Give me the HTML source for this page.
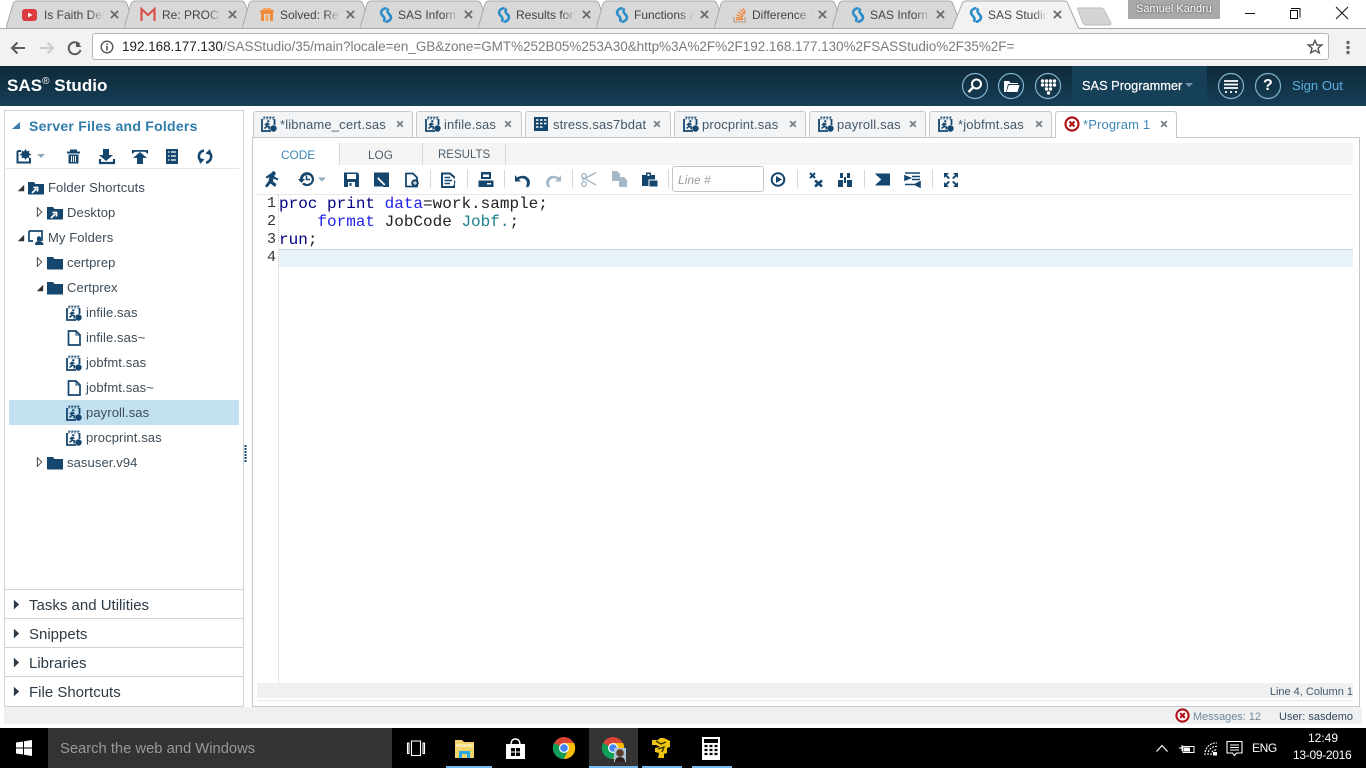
<!DOCTYPE html>
<html lang="en"><head><meta charset="utf-8"><title>SAS Studio</title>
<style>
html,body{margin:0;padding:0;width:1366px;height:768px;overflow:hidden;background:#fff;font-family:"Liberation Sans",sans-serif}
.a{position:absolute}
.t{position:absolute;white-space:nowrap;line-height:20px;height:20px}
svg{position:absolute;overflow:visible}
.tree{font-size:13px;color:#3c4b58;letter-spacing:.1px}
.ct{font-size:12px;color:#444;width:60px;overflow:hidden;-webkit-mask-image:linear-gradient(90deg,#000 75%,transparent);mask-image:linear-gradient(90deg,#000 75%,transparent)}
.tab{position:absolute;top:111px;height:26px;box-sizing:border-box;border:1px solid #c6c9cb;border-bottom:0;background:#f3f4f5;border-radius:3px 3px 0 0}
.tt{font-size:13px;color:#44586a;letter-spacing:.15px}
.acc{font-size:15px;color:#2b3a46}
.code{position:absolute;left:279px;font:16px/18px "Liberation Mono",monospace;white-space:pre;color:#222}
.num{position:absolute;left:257px;width:19px;text-align:right;font:15px/18px "Liberation Mono",monospace;color:#333}
</style></head><body>
<svg width="0" height="0" style="position:absolute">
<defs>
<symbol id="ctab" viewBox="0 0 130 28"><path d="M0 28L7 4Q8 1 11 1L117 1Q120 1 121 4L130 28" fill="#d8d8d8" stroke="#a8a8a8"/></symbol>
<symbol id="s" viewBox="0 0 16 16"><path d="M8.500 1C3 2 1.500 6 5 9C7 11 7 13 5.500 14.500" fill="none" stroke="#2a8dc9" stroke-width="2.600"/><path d="M7.500 15C13 14 14.500 10 11 7C9 5 9 3 10.500 1.500" fill="none" stroke="#2a8dc9" stroke-width="2.600"/></symbol>
<symbol id="x" viewBox="0 0 10 10"><path d="M1 1L9 9M9 1L1 9" stroke="#6b6b6b" stroke-width="2" fill="none"/></symbol>
<symbol id="tx" viewBox="0 0 10 10"><path d="M1.500 1.500L8.500 8.500M8.500 1.500L1.500 8.500" stroke="#7a7f84" stroke-width="2.200" fill="none"/></symbol>
<symbol id="prog" viewBox="0 0 16 16"><path d="M1 3V15H10M13.500 3V9" fill="none" stroke="#15466e" stroke-width="1.800"/><path d="M3 3.500V1.200H4.500M6 3.500V1.200H7.500M9 3.500V1.200H10.500M12 3.500V1.200H13.500" stroke="#15466e" stroke-width="1.100" fill="none"/><circle cx="7.300" cy="5.300" r="1.200" fill="#15466e"/><path d="M3.500 12.500L5.800 10.500L6 7.500L8.500 8.500M6 10L8.500 11L8 13.500M6 7.500L3.800 9" stroke="#15466e" stroke-width="1.500" fill="none"/><circle cx="12.500" cy="12.500" r="3.200" fill="#15466e"/></symbol>
<symbol id="file" viewBox="0 0 16 16"><path d="M2.500 1H10L14 5V15H2.500Z" fill="#fff" stroke="#15466e" stroke-width="1.700"/><path d="M10 1V5H14" fill="none" stroke="#15466e"/></symbol>
<symbol id="folder" viewBox="0 0 16 14"><path d="M0 13.500V1H6L7.500 3H16V13.500Z" fill="#15466e"/></symbol>
<symbol id="fshort" viewBox="0 0 16 14"><path d="M0 13.500V1H6L7.500 3H16V13.500Z" fill="#15466e"/><path d="M4 12L8 8M5.500 6.500H9.500V10.500" stroke="#fff" stroke-width="1.800" fill="none"/></symbol>
<symbol id="myf" viewBox="0 0 16 15"><path d="M1 1H14V10H9M1 1V11H5" fill="none" stroke="#15466e" stroke-width="1.700"/><circle cx="11" cy="8.500" r="2.200" fill="#15466e"/><path d="M7 15Q7 11 11 11T15.500 15Z" fill="#15466e"/></symbol>
<symbol id="open" viewBox="0 0 8 12"><path d="M1.500 1L6.500 6L1.500 11Z" fill="#fff" stroke="#333"/></symbol>
<symbol id="dn" viewBox="0 0 10 10"><path d="M9 1V9H1Z" fill="#333"/></symbol>
<symbol id="bar" viewBox="0 0 8 12"><path d="M1 0.500L7 6L1 11.500Z" fill="#2b3a46"/></symbol>
<symbol id="err" viewBox="0 0 16 16"><circle cx="8" cy="8" r="6.500" fill="#fff" stroke="#b01217" stroke-width="2.200"/><path d="M5.500 5.500L10.500 10.500M10.500 5.500L5.500 10.500" stroke="#b01217" stroke-width="2.200"/></symbol>
</defs></svg>

<!-- browser tab strip -->
<div class="a" style="left:0;top:0;width:1366px;height:28px;background:#fff"></div>
<svg style="left:6px;top:0" width="130" height="28"><use href="#ctab"/></svg>
<svg style="left:124px;top:0" width="130" height="28"><use href="#ctab"/></svg>
<svg style="left:242px;top:0" width="130" height="28"><use href="#ctab"/></svg>
<svg style="left:360px;top:0" width="130" height="28"><use href="#ctab"/></svg>
<svg style="left:478px;top:0" width="130" height="28"><use href="#ctab"/></svg>
<svg style="left:596px;top:0" width="130" height="28"><use href="#ctab"/></svg>
<svg style="left:714px;top:0" width="130" height="28"><use href="#ctab"/></svg>
<svg style="left:832px;top:0" width="130" height="28"><use href="#ctab"/></svg>
<div class="a" style="left:0;top:28px;width:1366px;height:1px;background:#aaa"></div>
<svg style="left:950px;top:0" width="130" height="30"><path d="M2 29L12 4Q13 1 16 1L114 1Q117 1 118 4L129 29" fill="#f2f2f2" stroke="#a8a8a8"/></svg>
<svg style="left:1077px;top:6px" width="36" height="20"><path d="M1 2H24Q26 2 27 4L34 17Q34 19 32 19H9Q7 19 6 17L1 4Q0 2 1 2Z" fill="#d4d4d4" stroke="#bbb"/></svg>
<svg style="left:22px;top:8px" width="16" height="14"><rect y="1" width="15" height="12" rx="3" fill="#dc3b3f"/><path d="M6 4.500L10.500 7L6 9.500Z" fill="#fff"/></svg>
<svg style="left:140px;top:7px" width="16" height="14"><path d="M1.500 14V2L8 8L14.500 2V14" fill="none" stroke="#d9534a" stroke-width="2.200"/></svg>
<svg style="left:259px;top:7px" width="16" height="16"><path d="M1 3H15L14 7H2Z" fill="#f08a3c"/><rect x="2" y="7" width="3" height="7" fill="#f08a3c"/><rect x="6.500" y="8" width="3" height="6" fill="#f6a761"/><rect x="11" y="7" width="3" height="7" fill="#f08a3c"/><rect x="4" y="1" width="8" height="2" fill="#f6a761"/></svg>
<svg style="left:378px;top:7px" width="16" height="16"><use href="#s"/></svg>
<svg style="left:496px;top:7px" width="16" height="16"><use href="#s"/></svg>
<svg style="left:614px;top:7px" width="16" height="16"><use href="#s"/></svg>
<svg style="left:732px;top:7px" width="16" height="16"><path d="M2 10V15H13V10" fill="none" stroke="#b9a28a" stroke-width="1.300"/><path d="M4 12.500H11M4 10.500L11 11.300M4.500 8L11 9.800M6 5L11.500 8.500M8.500 2.500L12.500 7.500M11 1L13.500 6.500" stroke="#ef8236" stroke-width="1.200" fill="none"/></svg>
<svg style="left:850px;top:7px" width="16" height="16"><use href="#s"/></svg>
<svg style="left:968px;top:7px" width="16" height="16"><use href="#s"/></svg>
<div class="t ct" style="left:44px;top:5px">Is Faith Delu</div>
<div class="t ct" style="left:162px;top:5px">Re: PROC Fo</div>
<div class="t ct" style="left:280px;top:5px">Solved: Re: P</div>
<div class="t ct" style="left:398px;top:5px">SAS Inform</div>
<div class="t ct" style="left:516px;top:5px">Results for: f</div>
<div class="t ct" style="left:634px;top:5px">Functions an</div>
<div class="t ct" style="left:752px;top:5px">Difference be</div>
<div class="t ct" style="left:870px;top:5px">SAS Inform</div>
<div class="t ct" style="left:988px;top:5px">SAS Studio</div>
<svg style="left:110px;top:10px" width="9" height="9"><use href="#x"/></svg>
<svg style="left:228px;top:10px" width="9" height="9"><use href="#x"/></svg>
<svg style="left:346px;top:10px" width="9" height="9"><use href="#x"/></svg>
<svg style="left:464px;top:10px" width="9" height="9"><use href="#x"/></svg>
<svg style="left:582px;top:10px" width="9" height="9"><use href="#x"/></svg>
<svg style="left:700px;top:10px" width="9" height="9"><use href="#x"/></svg>
<svg style="left:818px;top:10px" width="9" height="9"><use href="#x"/></svg>
<svg style="left:936px;top:10px" width="9" height="9"><use href="#x"/></svg>
<svg style="left:1053px;top:10px" width="9" height="9"><use href="#x"/></svg>
<div class="a" style="left:1128px;top:0;width:92px;height:19px;background:#a9a9a9;color:#fff;font-size:11px;line-height:18px;text-align:center;text-shadow:0 0 2px #333">Samuel Kandru</div>
<svg style="left:1240px;top:5px" width="120" height="16"><path d="M5 8.500H15" stroke="#111"/><path d="M51 3.500H60V12.500M50.500 5.500H57.500V13.500H50.500Z" fill="none" stroke="#111"/><path d="M96 2L108 14M108 2L96 14" stroke="#111" fill="none"/></svg>

<!-- browser toolbar -->
<div class="a" style="left:0;top:29px;width:1366px;height:37px;background:#f2f2f2"></div>
<svg style="left:10px;top:40px" width="80" height="20"><path d="M15 8H2M7.500 2.500L2 8L7.500 13.500" fill="none" stroke="#5a5a5a" stroke-width="2"/><path d="M30 8H43M37.500 2.500L43 8L37.500 13.500" fill="none" stroke="#cdcdcd" stroke-width="2"/><path d="M69.500 4.500A6 6 0 1 0 70.500 10" fill="none" stroke="#5a5a5a" stroke-width="2"/><path d="M66 1.500V7H71.500Z" fill="#5a5a5a"/></svg>
<div class="a" style="left:92px;top:33px;width:1237px;height:27px;box-sizing:border-box;background:#fff;border:1px solid #b5b5b5;border-radius:3px"></div>
<svg style="left:100px;top:40px" width="14" height="14"><circle cx="7" cy="7" r="5.800" fill="none" stroke="#555" stroke-width="1.400"/><path d="M7 6V10.500M7 3.500V5" stroke="#555" stroke-width="1.600"/></svg>
<div class="t" style="left:122px;top:37px;font-size:13.500px;color:#7b7b7b;letter-spacing:-.035px"><span style="color:#222">192.168.177.130</span>/SASStudio/35/main?locale=en_GB&amp;zone=GMT%252B05%253A30&amp;http%3A%2F%2F192.168.177.130%2FSASStudio%2F35%2F=</div>
<svg style="left:1307px;top:39px" width="16" height="16"><path d="M8 1.500L10 6H14.800L11 9.200L12.300 14L8 11.300L3.700 14L5 9.200L1.200 6H6Z" fill="none" stroke="#555" stroke-width="1.400"/></svg>
<svg style="left:1346px;top:40px" width="6" height="16"><circle cx="2" cy="2.500" r="1.700" fill="#666"/><circle cx="2" cy="7.500" r="1.700" fill="#666"/><circle cx="2" cy="12.500" r="1.700" fill="#666"/></svg>

<!-- SAS header -->
<div class="a" style="left:0;top:66px;width:1366px;height:40px;background:linear-gradient(#0f2937,#163f58)"></div>
<div class="t" style="left:7px;top:76px;font-size:17px;font-weight:bold;color:#fff;letter-spacing:.05px">SAS<sup style="font-size:10px;line-height:0;vertical-align:7px;font-weight:normal">®</sup> Studio</div>
<svg style="left:962px;top:73px" width="100" height="26" fill="none" stroke="#7fb4cf" stroke-width="1.200">
<circle cx="13" cy="13" r="12.500"/><circle cx="49" cy="13" r="12.500"/><circle cx="86" cy="13" r="12.500"/>
<circle cx="14.500" cy="11" r="4.500" stroke="#fff" stroke-width="2"/><path d="M11 14.500L6.500 19" stroke="#fff" stroke-width="2.600"/>
<path d="M42 19V8H47L48.500 10H56V11H46L44 19Z" fill="#fff" stroke="none"/><path d="M44.500 19L46.800 12H57.500L55.500 19Z" fill="#fff" stroke="none"/>
<g fill="#fff" stroke="none"><circle cx="80.500" cy="8" r="1.700"/><circle cx="84.500" cy="8" r="1.700"/><circle cx="88.500" cy="8" r="1.700"/><circle cx="92.500" cy="8" r="1.700"/><circle cx="80.500" cy="12" r="1.700"/><circle cx="84.500" cy="12" r="1.700"/><circle cx="88.500" cy="12" r="1.700"/><circle cx="92.500" cy="12" r="1.700"/><circle cx="84.500" cy="16" r="1.700"/><circle cx="88.500" cy="16" r="1.700"/><circle cx="86.500" cy="20" r="1.700"/></g></svg>
<div class="a" style="left:1072px;top:66px;width:135px;height:40px;background:#163f58"></div>
<div class="t" style="left:1082px;top:76px;font-size:12.800px;color:#fff;-webkit-text-stroke:.2px #fff">SAS Programmer</div>
<svg style="left:1185px;top:83px" width="8" height="5"><path d="M0 0H8L4 4Z" fill="#6f95ad"/></svg>
<svg style="left:1218px;top:73px" width="64" height="26" fill="none" stroke="#7fb4cf" stroke-width="1.200">
<circle cx="13" cy="13" r="12.500"/><circle cx="50" cy="13" r="12.500"/>
<path d="M6 8H20M6 11.500H20M6 15H20" stroke="#fff" stroke-width="1.700"/><path d="M7 19H9M12 19H14M17 19H19" stroke="#fff" stroke-width="1.800"/></svg>
<div class="t" style="left:1263px;top:76px;font-size:16px;font-weight:bold;color:#fff">?</div>
<div class="t" style="left:1292px;top:76px;font-size:13.100px;color:#5eb0e0">Sign Out</div>

<!-- left panel -->
<div class="a" style="left:4px;top:110px;width:240px;height:597px;box-sizing:border-box;border:1px solid #cfd2d4;background:#fff"></div>
<svg style="left:12px;top:121px" width="9" height="9"><path d="M8 1V8H0Z" fill="#3a7ea9"/></svg>
<div class="t" style="left:29px;top:116px;font-size:14px;font-weight:bold;color:#2f7cab;letter-spacing:.25px">Server Files and Folders</div>
<svg style="left:16px;top:148px" width="205" height="17">
<path d="M1.500 3V14.500H14V10" fill="none" stroke="#15466e" stroke-width="2"/><path d="M1.500 3H5" stroke="#15466e" stroke-width="2"/><path d="M9.500 1L11 3.500L13.500 2.500L13 5.200L15.500 6.500L13 7.800L13.500 10.500L11 9.500L9.500 12L8 9.500L5.500 10.500L6 7.800L3.500 6.500L6 5.200L5.500 2.500L8 3.500Z" fill="#15466e"/>
<path d="M21 6H29L25 10Z" fill="#8fa9bd"/>
<path d="M51 4.500H64M54 2.500H61" stroke="#15466e" stroke-width="2"/><path d="M52.500 6.500H62.500V15.500H52.500Z" fill="#15466e"/><path d="M55.500 8V14M57.500 8V14M59.500 8V14" stroke="#fff"/>
<path d="M87 1H93V7H97L90 13L83 7H87Z" fill="#15466e"/><path d="M84 11V15H98V11" fill="none" stroke="#15466e" stroke-width="2.200"/>
<path d="M116 2H132V6L129 3.800H119L116 6Z" fill="#15466e"/><path d="M124 4L131 10H127V16H121V10H117Z" fill="#15466e"/>
<rect x="150" y="1" width="12" height="15" fill="#15466e"/><path d="M152 4H153.500M155 4H160M152 8H153.500M155 8H160M152 12H153.500M155 12H160" stroke="#fff" stroke-width="1.200"/>
<path d="M188 2.500A6 6 0 0 0 185 13" fill="none" stroke="#15466e" stroke-width="2.600"/><path d="M182.500 9.500L188.500 11.500L184 16Z" fill="#15466e"/><path d="M190 14.500A6 6 0 0 0 193 4" fill="none" stroke="#15466e" stroke-width="2.600"/><path d="M195.500 7.500L189.500 5.500L194 1Z" fill="#15466e"/>
</svg>
<div class="a" style="left:6px;top:168px;width:233px;height:1px;background:#e3e5e6"></div>

<svg style="left:17px;top:184px" width="8" height="8"><use href="#dn"/></svg>
<svg style="left:28px;top:181px" width="16" height="14"><use href="#fshort"/></svg>
<div class="t tree" style="left:48px;top:178px">Folder Shortcuts</div>
<svg style="left:36px;top:206px" width="7" height="12"><use href="#open"/></svg>
<svg style="left:47px;top:206px" width="16" height="14"><use href="#fshort"/></svg>
<div class="t tree" style="left:67px;top:203px">Desktop</div>
<svg style="left:17px;top:234px" width="8" height="8"><use href="#dn"/></svg>
<svg style="left:28px;top:230px" width="16" height="15"><use href="#myf"/></svg>
<div class="t tree" style="left:48px;top:228px">My Folders</div>
<svg style="left:36px;top:256px" width="7" height="12"><use href="#open"/></svg>
<svg style="left:47px;top:256px" width="16" height="14"><use href="#folder"/></svg>
<div class="t tree" style="left:67px;top:253px">certprep</div>
<svg style="left:36px;top:284px" width="8" height="8"><use href="#dn"/></svg>
<svg style="left:47px;top:281px" width="16" height="14"><use href="#folder"/></svg>
<div class="t tree" style="left:67px;top:278px">Certprex</div>
<div class="a" style="left:9px;top:400px;width:230px;height:25px;background:#c3e0f0"></div>
<svg style="left:66px;top:305px" width="16" height="16"><use href="#prog"/></svg>
<div class="t tree" style="left:86px;top:303px">infile.sas</div>
<svg style="left:66px;top:330px" width="16" height="16"><use href="#file"/></svg>
<div class="t tree" style="left:86px;top:328px">infile.sas~</div>
<svg style="left:66px;top:355px" width="16" height="16"><use href="#prog"/></svg>
<div class="t tree" style="left:86px;top:353px">jobfmt.sas</div>
<svg style="left:66px;top:380px" width="16" height="16"><use href="#file"/></svg>
<div class="t tree" style="left:86px;top:378px">jobfmt.sas~</div>
<svg style="left:66px;top:405px" width="16" height="16"><use href="#prog"/></svg>
<div class="t tree" style="left:86px;top:403px">payroll.sas</div>
<svg style="left:66px;top:430px" width="16" height="16"><use href="#prog"/></svg>
<div class="t tree" style="left:86px;top:428px">procprint.sas</div>
<svg style="left:36px;top:456px" width="7" height="12"><use href="#open"/></svg>
<svg style="left:47px;top:456px" width="16" height="14"><use href="#folder"/></svg>
<div class="t tree" style="left:67px;top:453px">sasuser.v94</div>
<svg style="left:244px;top:445px" width="4" height="17"><path d="M1.500 0V17" stroke="#15466e" stroke-width="2" stroke-dasharray="2 1"/></svg>

<div class="a" style="left:5px;top:589px;width:238px;height:1px;background:#cfd2d4"></div>
<div class="a" style="left:5px;top:618px;width:238px;height:1px;background:#cfd2d4"></div>
<div class="a" style="left:5px;top:647px;width:238px;height:1px;background:#cfd2d4"></div>
<div class="a" style="left:5px;top:676px;width:238px;height:1px;background:#cfd2d4"></div>
<svg style="left:13px;top:599px" width="7" height="11"><use href="#bar"/></svg>
<svg style="left:13px;top:628px" width="7" height="11"><use href="#bar"/></svg>
<svg style="left:13px;top:657px" width="7" height="11"><use href="#bar"/></svg>
<svg style="left:13px;top:686px" width="7" height="11"><use href="#bar"/></svg>
<div class="t acc" style="left:29px;top:596px">Tasks and Utilities</div>
<div class="t acc" style="left:29px;top:625px">Snippets</div>
<div class="t acc" style="left:29px;top:654px">Libraries</div>
<div class="t acc" style="left:29px;top:683px">File Shortcuts</div>

<!-- right panel -->
<div class="a" style="left:252px;top:137px;width:1108px;height:570px;box-sizing:border-box;border:1px solid #c6c9cb;background:#fff"></div>
<div class="tab" style="left:253px;width:160px"></div>
<div class="tab" style="left:416px;width:106px"></div>
<div class="tab" style="left:525px;width:146px"></div>
<div class="tab" style="left:674px;width:132px"></div>
<div class="tab" style="left:809px;width:117px"></div>
<div class="tab" style="left:929px;width:123px"></div>
<div class="tab" style="left:1055px;width:122px;height:27px;background:#fff;z-index:2"></div>
<svg style="left:261px;top:116px" width="16" height="16"><use href="#prog"/></svg>
<svg style="left:425px;top:116px" width="16" height="16"><use href="#prog"/></svg>
<svg style="left:534px;top:116px" width="15" height="16"><path d="M0 1H14V15H0Z" fill="#15466e"/><path d="M2 4H4.500M6 4H8.500M10 4H12.500M2 7.500H4.500M6 7.500H8.500M10 7.500H12.500M2 11H4.500M6 11H8.500" stroke="#fff" stroke-width="1.500"/></svg>
<svg style="left:683px;top:116px" width="16" height="16"><use href="#prog"/></svg>
<svg style="left:818px;top:116px" width="16" height="16"><use href="#prog"/></svg>
<svg style="left:938px;top:116px" width="16" height="16"><use href="#prog"/></svg>
<svg style="left:1064px;top:116px;z-index:3" width="16" height="16"><use href="#err"/></svg>
<div class="t tt" style="left:280px;top:115px">*libname_cert.sas</div>
<div class="t tt" style="left:444px;top:115px">infile.sas</div>
<div class="t tt" style="left:553px;top:115px">stress.sas7bdat</div>
<div class="t tt" style="left:702px;top:115px">procprint.sas</div>
<div class="t tt" style="left:837px;top:115px">payroll.sas</div>
<div class="t tt" style="left:958px;top:115px">*jobfmt.sas</div>
<div class="t tt" style="left:1083px;top:115px;color:#3d86b8;z-index:3">*Program 1</div>
<svg style="left:396px;top:120px" width="8" height="8"><use href="#tx"/></svg>
<svg style="left:504px;top:120px" width="8" height="8"><use href="#tx"/></svg>
<svg style="left:653px;top:120px" width="8" height="8"><use href="#tx"/></svg>
<svg style="left:789px;top:120px" width="8" height="8"><use href="#tx"/></svg>
<svg style="left:909px;top:120px" width="8" height="8"><use href="#tx"/></svg>
<svg style="left:1035px;top:120px" width="8" height="8"><use href="#tx"/></svg>
<svg style="left:1160px;top:120px;z-index:3" width="8" height="8"><use href="#tx"/></svg>

<div class="a" style="left:257px;top:143px;width:1096px;height:22px;background:#f5f5f5"></div>
<div class="a" style="left:257px;top:143px;width:82px;height:22px;background:#fff;border-right:1px solid #d5d7d9"></div>
<div class="a" style="left:422px;top:143px;width:1px;height:22px;background:#d5d7d9"></div>
<div class="a" style="left:505px;top:143px;width:1px;height:22px;background:#d5d7d9"></div>
<div class="t" style="left:281px;top:145px;font-size:11.800px;color:#3a86b5">CODE</div>
<div class="t" style="left:368px;top:145px;font-size:11.800px;color:#4b5d6c">LOG</div>
<div class="t" style="left:438px;top:145px;font-size:11.500px;color:#4b5d6c">RESULTS</div>

<!-- editor toolbar -->
<svg style="left:257px;top:165px" width="720" height="29">
<g fill="#15466e">
<circle cx="16.500" cy="8.500" r="2.200"/><path d="M8 21L11.500 16L12.500 12L10 13.500L8.500 12L13.500 8.500H16L18 12L21.500 13.500L20.500 15.500L16.500 13.500L16 16.500L19.500 19L18 22L13.500 18.500L10 22.500Z"/>
<path d="M43 14A7 7 0 1 1 45 19L47 17.500A4.500 4.500 0 1 0 45.800 14H48L44.500 18L41 14Z"/><path d="M49.500 10.500V14.500H53" fill="none" stroke="#15466e" stroke-width="1.500"/>
<path d="M61 12.500H69L65 16.500Z" fill="#8fa9bd"/>
<path d="M87 7.500H100.500L102 9V22H87ZM90 9V14H99V9ZM91 17V22H98V17Z" fill-rule="evenodd"/><rect x="92.500" y="18" width="2" height="3"/>
<path d="M117 7.500H132V15L127 21.500H117Z"/><path d="M121 12L128 19L131 21.500L127.500 21L120.500 14Z" fill="#fff"/><path d="M132 15L132 22H126Z"/>
<path d="M149 8.500H156L160 12.500V21.500H149Z" fill="none" stroke="#15466e" stroke-width="1.800"/><circle cx="158" cy="18" r="3.800"/><path d="M156 18H160M158 16V20" stroke="#fff"/>
<g transform="translate(-2,0)"><path d="M187 8.500H195L199 12V22H187Z" fill="none" stroke="#15466e" stroke-width="2"/><path d="M189.500 12.500H195M189.500 15.500H197M189.500 18.500H195" stroke="#15466e" stroke-width="1.400"/><path d="M197 12L202 15L198 21Z" fill="#fff"/><path d="M199 14.500L200.500 17L199 19.500Z"/></g>
<path d="M224 7H234V14H224ZM226 9.500V12H232V9.500Z" fill-rule="evenodd"/><path d="M221.500 15.500H236.500V22H221.500Z"/><rect x="230" y="18" width="4" height="1.500" fill="#fff"/>
<path d="M258 10L258 16.500L264 16.500L261.800 14.500A5 5 0 0 1 270 17.500L269 22.500L272 21.500Q275 14 268 11Q264 10 260 12.500Z"/>
</g>
<g fill="#a4b7c6"><path d="M304 10L304 16.500L298 16.500L300.200 14.500A5 5 0 0 0 292 17.500L293 22.500L290 21.500Q287 14 294 11Q298 10 302 12.500Z"/>
<g transform="translate(4,0)"><path d="M325 15L339 7.500M325 12L339 20" fill="none" stroke="#a4b7c6" stroke-width="1.400" transform="translate(-4,0)"/><circle cx="323" cy="11" r="2.300" fill="none" stroke="#a4b7c6" stroke-width="1.300"/><circle cx="323" cy="19" r="2.300" fill="none" stroke="#a4b7c6" stroke-width="1.300"/></g>
<path d="M355 6H360L363 9V16H355Z"/><path d="M362 12H367L370 15V22H362Z"/></g>
<g fill="#15466e"><path d="M385 10H389V7.500H394V10H398V21H385Z"/><rect x="390.500" y="9" width="2" height="2" fill="#fff"/><path d="M392 15H401V22H392Z" stroke="#fff"/></g>
<path d="M173.500 5V23M210.500 5V23M247.500 5V23M315.500 5V23M411.500 5V23M540.500 5V23M607.500 5V23M675.500 5V23" stroke="#d5d7d9"/>
<circle cx="521" cy="14.500" r="6.300" fill="none" stroke="#15466e" stroke-width="2"/><path d="M519 11L525 14.500L519 18Z" fill="#15466e"/>
<path d="M553 8L558 13M558 8L553 13" stroke="#15466e" stroke-width="2"/><path d="M558 15.500L565 21.500M565 15.500L558 21.500" stroke="#15466e" stroke-width="2.600"/>
<path d="M583 8H586V13H583ZM590 8H593V13H590ZM581 15H586V22H581ZM590 15H595V22H590ZM587 12H589V18H587Z" fill="#15466e"/>
<path d="M618 8.500H633V20.500H618L623 14.500Z" fill="#15466e"/><path d="M618 9.500L623.500 14.500L618 19.500" fill="none" stroke="#fff"/>
<path d="M648 8H663M655 11.500H663M655 14.500H663M648 19.500H657M648 11L653 13L648 15ZM663 17L658 19.500L663 22Z" stroke="#15466e" stroke-width="1.600" fill="#15466e"/>
<path d="M687 8H692L690 10L693 13L691.500 14L688.500 11.500L687 13ZM701 8H696L698 10L695 13L696.500 14L699.500 11.500L701 13ZM687 22H692L690 20L693 17L691.500 16L688.500 18.500L687 17ZM701 22H696L698 20L695 17L696.500 16L699.500 18.500L701 17Z" fill="#15466e"/>
</svg>
<div class="a" style="left:672px;top:166px;width:92px;height:26px;box-sizing:border-box;border:1px solid #c3c6c8;border-radius:3px;background:#fff"></div>
<div class="t" style="left:678px;top:170px;font-size:12px;font-style:italic;color:#9aa0a5">Line #</div>
<div class="a" style="left:257px;top:194px;width:1096px;height:1px;background:#e6e8e9"></div>

<!-- editor -->
<div class="a" style="left:278px;top:195px;width:0;height:488px;border-left:1px dotted #c9cccf"></div>
<div class="a" style="left:279px;top:249px;width:1074px;height:17px;background:#e8f2f9;border-top:1px solid #c8d0d8"></div>
<div class="num" style="top:195px">1</div>
<div class="num" style="top:213px">2</div>
<div class="num" style="top:231px">3</div>
<div class="num" style="top:249px">4</div>
<div class="code" style="top:195px"><span style="color:#000080">proc print</span> <span style="color:#2222ee">data</span>=work.sample;</div>
<div class="code" style="top:213px">    <span style="color:#2222ee">format</span> JobCode <span style="color:#1d7f8c">Jobf.</span>;</div>
<div class="code" style="top:231px"><span style="color:#000080">run</span>;</div>
<div class="a" style="left:257px;top:683px;width:1096px;height:15px;background:#eff0f1"></div>
<div class="a" style="left:257px;top:700px;width:1096px;height:1px;background:#e3e5e6"></div>
<div class="t" style="right:13px;top:682px;font-size:11px;color:#44586a">Line 4, Column 1</div>

<!-- status bar -->
<div class="a" style="left:4px;top:707px;width:1358px;height:17px;background:#eff0f1"></div>
<svg style="left:1175px;top:708px" width="15" height="15"><use href="#err"/></svg>
<div class="t" style="left:1193px;top:707px;font-size:11px;color:#71879a;letter-spacing:-.05px">Messages: 12</div>
<div class="t" style="left:1279px;top:707px;font-size:11px;color:#35475a">User: sasdemo</div>

<!-- taskbar -->
<div class="a" style="left:0;top:728px;width:1366px;height:40px;background:#000"></div>
<svg style="left:16px;top:740px" width="16" height="16"><path d="M0 2.500L7 1.500V7.500H0ZM8 1.300L16 0V7.500H8ZM0 8.500H7V14.500L0 13.500ZM8 8.500H16V16L8 14.700Z" fill="#fff"/></svg>
<div class="a" style="left:48px;top:728px;width:344px;height:40px;background:#333"></div>
<div class="t" style="left:60px;top:739px;font-size:14.750px;color:#999">Search the web and Windows</div>
<svg style="left:406px;top:740px" width="20" height="17"><path d="M5.500 1H14.500V15.500H5.500ZM1.500 3H3V13.500H1.500ZM17 3H18.500V13.500H17Z" fill="none" stroke="#fff" stroke-width="1.100"/></svg>
<svg style="left:455px;top:738px" width="20" height="21"><path d="M0 2H7L9 4H19V20H0Z" fill="#f5d36b"/><path d="M1 6H18V9H1Z" fill="#fbe8a6"/><path d="M4 13H15V20H12V16H7V20H4Z" fill="#29a8e0"/></svg>
<svg style="left:505px;top:738px" width="21" height="22"><path d="M1 6H20V21H1Z" fill="#fff"/><path d="M6 7Q6 1 10.500 1T15 7" fill="none" stroke="#fff" stroke-width="1.400"/><path d="M6 10H10V13.500H6ZM11 10H15V13.500H11ZM6 14.500H10V18H6ZM11 14.500H15V18H11Z" fill="#000"/></svg>
<svg style="left:553px;top:737px" width="22" height="22"><circle cx="11" cy="11" r="11" fill="#db4437"/><path d="M11 11L1 6A11 11 0 0 0 11 22L16 11Z" fill="#0f9d58"/><path d="M11 6H21A11 11 0 0 1 11 22L16 11Z" fill="#fbbc05"/><circle cx="11" cy="11" r="5" fill="#fff"/><circle cx="11" cy="11" r="3.800" fill="#4285f4"/></svg>
<div class="a" style="left:589px;top:728px;width:49px;height:40px;background:#333"></div>
<svg style="left:602px;top:737px" width="22" height="22"><circle cx="11" cy="11" r="11" fill="#db4437"/><path d="M11 11L1 6A11 11 0 0 0 11 22L16 11Z" fill="#0f9d58"/><path d="M11 6H21A11 11 0 0 1 11 22L16 11Z" fill="#fbbc05"/><circle cx="11" cy="11" r="5" fill="#fff"/><circle cx="11" cy="11" r="3.800" fill="#4285f4"/></svg>
<svg style="left:614px;top:748px" width="12" height="14"><rect width="12" height="14" fill="#aac3d6"/><circle cx="6" cy="5" r="3.800" fill="#5a3c28"/><path d="M1 14Q1 9 6 9T11 14Z" fill="#2c2320"/></svg>
<svg style="left:651px;top:737px" width="20" height="22"><path d="M1 3H7L9 1H13L19 4V10L16 11V16L13 17V21H7L8 16L4 15V11L9 10L5 8H1Z" fill="#f1c40f"/><path d="M5 4L10 7L15 5M7 12L13 10L11 15" fill="none" stroke="#3a3000" stroke-width="1.400"/></svg>
<svg style="left:702px;top:737px" width="18" height="23"><rect width="18" height="23" fill="#fff"/><rect x="2" y="2" width="14" height="4" fill="#000"/><path d="M2.500 9H5.500M7.500 9H10.500M12.500 9H15.500M2.500 13H5.500M7.500 13H10.500M12.500 13H15.500M2.500 17H5.500M7.500 17H10.500M12.500 17H15.500" stroke="#000" stroke-width="2.200"/></svg>
<div class="a" style="left:446px;top:766px;width:46px;height:2px;background:#76b9ed"></div>
<div class="a" style="left:589px;top:766px;width:49px;height:2px;background:#76b9ed"></div>
<div class="a" style="left:642px;top:766px;width:40px;height:2px;background:#76b9ed"></div>
<div class="a" style="left:692px;top:766px;width:40px;height:2px;background:#76b9ed"></div>
<svg style="left:1155px;top:740px" width="100" height="18" fill="none" stroke="#fff">
<path d="M1.500 11.500L7 5.500L12.500 11.500" stroke-width="1.200"/>
<path d="M24 8H28M27 5V11M28 6.500H39V12.500H28Z"/><rect x="29" y="7.500" width="6" height="4" fill="#fff" stroke="none"/>
<path d="M50 15A11 11 0 0 1 62 3M53 15A8 8 0 0 1 62 6.500M56 15A5 5 0 0 1 62 10" stroke-width="1.100" stroke-dasharray="2 1"/><rect x="58" y="12" width="4" height="3.500" fill="#fff" stroke="none"/>
<path d="M72 1.500H87V13H81.500L79.500 15.500L77.500 13H72ZM75 5H84M75 7.500H84M75 10H84" stroke-width="1.100"/></svg>
<div class="t" style="left:1252px;top:738px;font-size:12px;color:#fff;letter-spacing:-.4px">ENG</div>
<div class="t" style="left:1308px;top:728px;font-size:12px;color:#fff">12:49</div>
<div class="t" style="left:1293px;top:745px;font-size:12px;color:#fff;letter-spacing:-.3px">13-09-2016</div>
</body></html>
